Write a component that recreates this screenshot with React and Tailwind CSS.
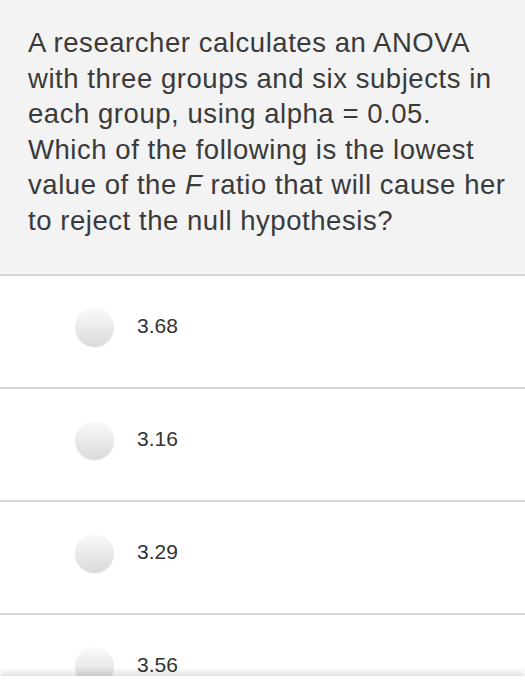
import React from "react";

const options = ["3.68", "3.16", "3.29", "3.56"];

const lines = [
  <>A researcher calculates an ANOVA</>,
  <>with three groups and six subjects in</>,
  <>each group, using alpha = 0.05.</>,
  <>Which of the following is the lowest</>,
  <>value of the <i>F</i> ratio that will cause her</>,
  <>to reject the null hypothesis?</>,
];

function Radio() {
  return (
    <div className="w-[39px] h-[39px] rounded-full bg-gradient-to-b from-[#fafafa] to-[#dadada] shadow-[0_1px_1px_rgba(0,0,0,0.06)]" />
  );
}

export default function App() {
  return (
    <div
      className="relative w-[525px] h-[700px] overflow-hidden bg-white text-[#333]"
      style={{ fontFamily: '"Liberation Sans", Arial, sans-serif' }}
    >
      <div className="bg-[#f3f3f3] h-[276px] border-b-2 border-[#d6d6d6] pl-[28px] pt-[25px]">
        {lines.map((l, i) => (
          <div key={i} className="whitespace-nowrap text-[27.5px] leading-[35.5px] text-[#3a3a3a] tracking-[0.55px]">
            {l}
          </div>
        ))}
      </div>
      {options.map((o) => (
        <div key={o} className="h-[113px] border-b-2 border-[#d6d6d6] flex items-center pl-[75px] pb-[8px]">
          <Radio />
          <span className="ml-[23px] text-[21px] text-[#333] -mt-[4px]">{o}</span>
        </div>
      ))}
      <div className="absolute left-0 right-0 bottom-0 h-[24px] bg-white shadow-[0_-4px_6px_rgba(0,0,0,0.12)]" />
    </div>
  );
}
